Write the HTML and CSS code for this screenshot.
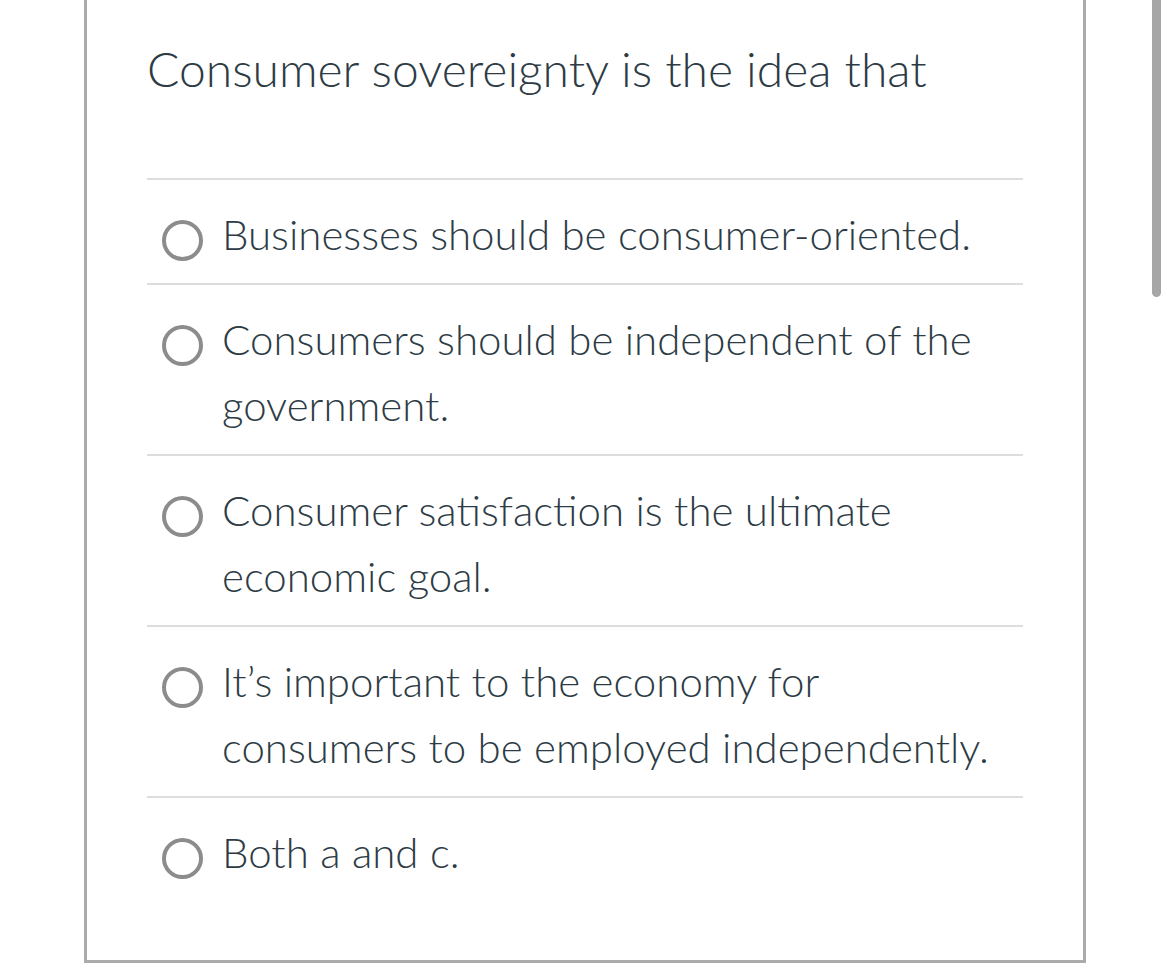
FILE: index.html
```html
<!DOCTYPE html>
<html lang="en">
<head>
<meta charset="utf-8">
<title>Quiz question</title>
<link rel="stylesheet" href="styles.css">
</head>
<body>
<div class="page">
  <div class="card">
    <div class="question">Consumer sovereignty is the idea that</div>
    <div class="answers">
      <label class="answer"><span class="radio"></span><span class="answer-text">Businesses should be consumer-oriented.</span></label>
      <label class="answer"><span class="radio"></span><span class="answer-text">Consumers should be independent of the government.</span></label>
      <label class="answer"><span class="radio"></span><span class="answer-text">Consumer satisfaction is the ultimate economic goal.</span></label>
      <label class="answer"><span class="radio"></span><span class="answer-text">It’s important to the economy for consumers to be employed independently.</span></label>
      <label class="answer"><span class="radio"></span><span class="answer-text">Both a and c.</span></label>
    </div>
  </div>
</div>
<div class="scrollbar"></div>
</body>
</html>
```

FILE: styles.css
```css
html, body {
  margin: 0;
  padding: 0;
  background: #ffffff;
}
body {
  font-family: Lato, "Liberation Sans", sans-serif;
  color: #2d3b45;
  height: 971px;
  overflow: hidden;
}
.page {
  padding-left: 84px;
}
.card {
  box-sizing: border-box;
  width: 1002px;
  border: 3px solid #ababab;
  border-top: none;
  padding: 0 60px 59px;
}
.question {
  font-size: 48px;
  font-weight: 300;
  line-height: 60px;
  padding-top: 39px;
  padding-bottom: 79px;
}
.answer {
  display: flex;
  align-items: flex-start;
  border-top: 2px solid #dddddd;
  padding: 21px 0 16px;
}
.radio {
  flex: none;
  width: 41px;
  height: 41px;
  box-sizing: border-box;
  border: 4px solid #8c8c8c;
  border-radius: 50%;
  margin-left: 15px;
  margin-top: 19px;
  margin-right: 19px;
}
.answer-text {
  font-size: 42px;
  font-weight: 300;
  line-height: 66px;
  max-width: 780px;
}
.scrollbar {
  position: absolute;
  top: 0;
  right: 9px;
  width: 9px;
  height: 297px;
  background: #a6a6a6;
  border-radius: 0 0 5px 5px;
}
```
